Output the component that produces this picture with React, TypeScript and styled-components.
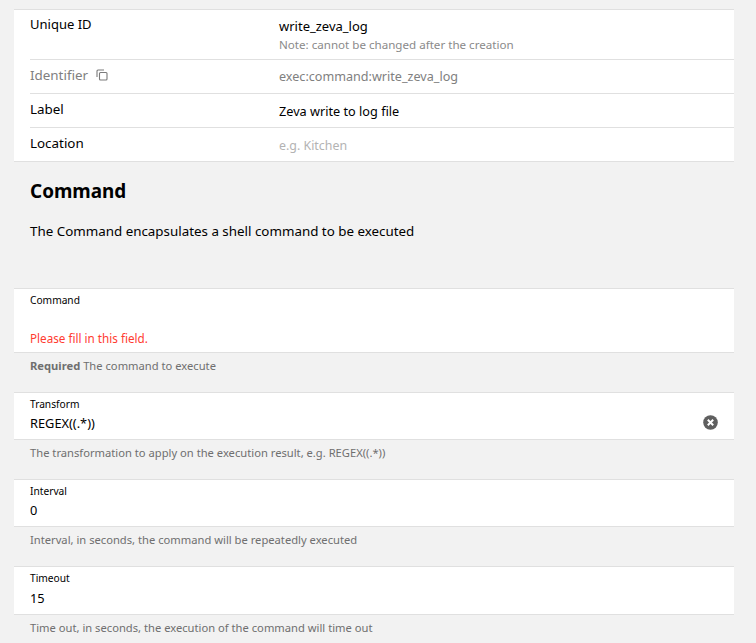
import React from "react";
import styled, { createGlobalStyle } from "styled-components";

const GlobalStyle = createGlobalStyle`
    html, body {
        margin: 0;
        padding: 0;
        background: #f2f2f2;
    }
    body {
        font-family: "Noto Sans", "Open Sans", sans-serif;
        height: 643px;
        overflow: hidden;
    }
`;

const Page = styled.div`
    padding: 9px 22px 0 14px;
`;

const Card = styled.div`
    background: #fff;
    border-top: 1px solid #e0e0e0;
    border-bottom: 1px solid #e0e0e0;
`;

const Row = styled.div<{ $height: number; $last?: boolean }>`
    display: flex;
    height: ${(p) => p.$height}px;
    margin-left: 16px;
    box-sizing: border-box;
    border-bottom: ${(p) => (p.$last ? "none" : "1px solid #e0e0e0")};
`;

const RowTitle = styled.div<{ $muted?: boolean; $tight?: boolean }>`
    width: 249px;
    flex: none;
    display: flex;
    align-items: center;
    height: ${(p) => (p.$tight ? 28 : 29)}px;
    font-size: ${(p) => (p.$tight ? 13 : 13.4)}px;
    color: ${(p) => (p.$muted ? "#808080" : "#000")};
`;

const RowBody = styled.div<{ $top?: number }>`
    padding-top: ${(p) => p.$top ?? 8}px;
    flex: 1;
`;

const RowValue = styled.div<{ $tone?: "muted" | "hint"; $size?: number }>`
    font-size: ${(p) => p.$size ?? 12.7}px;
    line-height: 18px;
    color: ${(p) => (p.$tone === "muted" ? "#808080" : p.$tone === "hint" ? "#b3b3b3" : "#000")};
`;

const RowNote = styled.div`
    margin-top: 1px;
    font-size: 11.6px;
    line-height: 18px;
    color: #8a8a8a;
`;

const CopyIcon = styled.svg`
    width: 12px;
    height: 12px;
    margin-left: 8px;
    fill: none;
    stroke: #7a7a7a;
    stroke-width: 1.1;
`;

const SectionHead = styled.div`
    padding: 16px 16px 0;
    height: 126px;
    box-sizing: border-box;
`;

const SectionTitle = styled.h2`
    margin: 0;
    font-size: 18.9px;
    line-height: 26px;
    font-weight: 700;
    color: #000;
`;

const SectionText = styled.p`
    margin: 17px 0 0;
    font-size: 13.36px;
    line-height: 20px;
    color: #000;
`;

const Field = styled.div<{ $height: number }>`
    position: relative;
    height: ${(p) => p.$height}px;
    box-sizing: border-box;
    background: #fff;
    border-top: 1px solid #e0e0e0;
    border-bottom: 1px solid #e0e0e0;
    padding: 4px 16px 0;
`;

const FieldLabel = styled.div`
    font-size: 10.2px;
    line-height: 14px;
    color: #000;
`;

const FieldValue = styled.div<{ $gap?: number }>`
    margin-top: ${(p) => p.$gap ?? 3}px;
    font-size: 12.8px;
    line-height: 18px;
    color: #000;
`;

const FieldError = styled.div`
    margin-top: 22px;
    font-size: 11.7px;
    line-height: 18px;
    color: #ff3b30;
`;

const ClearIcon = styled.svg`
    position: absolute;
    right: 16px;
    top: 22px;
    width: 15px;
    height: 15px;
`;

const Help = styled.div`
    height: 39px;
    box-sizing: border-box;
    padding: 4px 16px 0;
    font-size: 11.2px;
    line-height: 18px;
    color: #6f6f6f;
    b {
        font-weight: 700;
    }
`;

export default function App() {
    return (
        <Page>
            <GlobalStyle />
            <Card>
                <Row $height={50}>
                    <RowTitle $tight>Unique ID</RowTitle>
                    <RowBody $top={7}>
                        <RowValue $size={13}>write_zeva_log</RowValue>
                        <RowNote>Note: cannot be changed after the creation</RowNote>
                    </RowBody>
                </Row>
                <Row $height={34}>
                    <RowTitle $muted>
                        Identifier
                        <CopyIcon viewBox="0 0 12 12">
                            <rect x="3.5" y="3.5" width="7.5" height="7.5" rx="1" />
                            <path d="M1 8V2a1 1 0 0 1 1-1h6" />
                        </CopyIcon>
                    </RowTitle>
                    <RowBody>
                        <RowValue $tone="muted" $size={12.6}>exec:command:write_zeva_log</RowValue>
                    </RowBody>
                </Row>
                <Row $height={34}>
                    <RowTitle>Label</RowTitle>
                    <RowBody>
                        <RowValue>Zeva write to log file</RowValue>
                    </RowBody>
                </Row>
                <Row $height={33} $last>
                    <RowTitle>Location</RowTitle>
                    <RowBody $top={9}>
                        <RowValue $tone="hint" $size={12.4}>e.g. Kitchen</RowValue>
                    </RowBody>
                </Row>
            </Card>
            <SectionHead>
                <SectionTitle>Command</SectionTitle>
                <SectionText>The Command encapsulates a shell command to be executed</SectionText>
            </SectionHead>
            <Field $height={65}>
                <FieldLabel>Command</FieldLabel>
                <FieldError>Please fill in this field.</FieldError>
            </Field>
            <Help>
                <b>Required</b> The command to execute
            </Help>
            <Field $height={48}>
                <FieldLabel>Transform</FieldLabel>
                <FieldValue>REGEX((.*))</FieldValue>
                <ClearIcon viewBox="0 0 15 15">
                    <circle cx="7.5" cy="7.5" r="7.3" fill="#5f5f5f" />
                    <path d="M4.8 4.8l5.4 5.4M10.2 4.8l-5.4 5.4" stroke="#fff" strokeWidth="2" />
                </ClearIcon>
            </Field>
            <Help>The transformation to apply on the execution result, e.g. REGEX((.*))</Help>
            <Field $height={48}>
                <FieldLabel>Interval</FieldLabel>
                <FieldValue>0</FieldValue>
            </Field>
            <Help>Interval, in seconds, the command will be repeatedly executed</Help>
            <Field $height={49}>
                <FieldLabel>Timeout</FieldLabel>
                <FieldValue $gap={4}>15</FieldValue>
            </Field>
            <Help>Time out, in seconds, the execution of the command will time out</Help>
        </Page>
    );
}
